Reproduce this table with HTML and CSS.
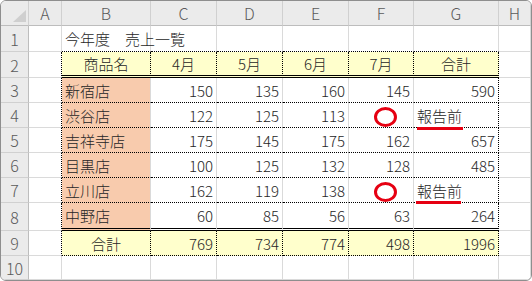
FILE: index.html
```html
<!DOCTYPE html>
<html lang="ja">
<head>
<meta charset="utf-8">
<title>売上一覧</title>
<link rel="stylesheet" href="styles.css">
</head>
<body>
<div class="frame">
  <div class="sheet">
    <!-- header row -->
    <div class="cell hd corner"><svg width="13" height="12" viewBox="0 0 13 12"><polygon points="13,0 13,12 0,12" fill="#cfcfcf"/></svg></div>
    <div class="cell hd">A</div>
    <div class="cell hd">B</div>
    <div class="cell hd">C</div>
    <div class="cell hd">D</div>
    <div class="cell hd">E</div>
    <div class="cell hd">F</div>
    <div class="cell hd">G</div>
    <div class="cell hd">H</div>

    <!-- row 1 -->
    <div class="cell rh">1</div>
    <div class="cell"></div>
    <div class="cell bdot title">今年度　売上一覧</div>
    <div class="cell bdot"></div>
    <div class="cell bdot"></div>
    <div class="cell bdot"></div>
    <div class="cell bdot"></div>
    <div class="cell bdot"></div>
    <div class="cell"></div>

    <!-- row 2 -->
    <div class="cell rh">2</div>
    <div class="cell vdot"></div>
    <div class="cell yel ctr vdot bdbl">商品名</div>
    <div class="cell yel ctr vdot bdbl">4月</div>
    <div class="cell yel ctr vdot bdbl">5月</div>
    <div class="cell yel ctr vdot bdbl">6月</div>
    <div class="cell yel ctr vdot bdbl">7月</div>
    <div class="cell yel ctr vdot bdbl">合計</div>
    <div class="cell"></div>

    <!-- row 3 -->
    <div class="cell rh">3</div>
    <div class="cell vdot"></div>
    <div class="cell sal bdot">新宿店</div>
    <div class="cell num bdot">150</div>
    <div class="cell num bdot">135</div>
    <div class="cell num bdot">160</div>
    <div class="cell num bdot">145</div>
    <div class="cell num bdot vdot">590</div>
    <div class="cell"></div>

    <!-- row 4 -->
    <div class="cell rh">4</div>
    <div class="cell vdot"></div>
    <div class="cell sal bdot">渋谷店</div>
    <div class="cell num bdot">122</div>
    <div class="cell num bdot">125</div>
    <div class="cell num bdot">113</div>
    <div class="cell num bdot"></div>
    <div class="cell bdot vdot">報告前</div>
    <div class="cell"></div>

    <!-- row 5 -->
    <div class="cell rh">5</div>
    <div class="cell vdot"></div>
    <div class="cell sal bdot">吉祥寺店</div>
    <div class="cell num bdot">175</div>
    <div class="cell num bdot">145</div>
    <div class="cell num bdot">175</div>
    <div class="cell num bdot">162</div>
    <div class="cell num bdot vdot">657</div>
    <div class="cell"></div>

    <!-- row 6 -->
    <div class="cell rh">6</div>
    <div class="cell vdot"></div>
    <div class="cell sal bdot">目黒店</div>
    <div class="cell num bdot">100</div>
    <div class="cell num bdot">125</div>
    <div class="cell num bdot">132</div>
    <div class="cell num bdot">128</div>
    <div class="cell num bdot vdot">485</div>
    <div class="cell"></div>

    <!-- row 7 -->
    <div class="cell rh">7</div>
    <div class="cell vdot"></div>
    <div class="cell sal bdot">立川店</div>
    <div class="cell num bdot">162</div>
    <div class="cell num bdot">119</div>
    <div class="cell num bdot">138</div>
    <div class="cell num bdot"></div>
    <div class="cell bdot vdot">報告前</div>
    <div class="cell"></div>

    <!-- row 8 -->
    <div class="cell rh">8</div>
    <div class="cell vdot"></div>
    <div class="cell sal bdbl">中野店</div>
    <div class="cell num bdbl">60</div>
    <div class="cell num bdbl">85</div>
    <div class="cell num bdbl">56</div>
    <div class="cell num bdbl">63</div>
    <div class="cell num bdbl vdot">264</div>
    <div class="cell"></div>

    <!-- row 9 -->
    <div class="cell rh">9</div>
    <div class="cell vdot"></div>
    <div class="cell yel ctr vdot bdot">合計</div>
    <div class="cell yel num vdot bdot">769</div>
    <div class="cell yel num vdot bdot">734</div>
    <div class="cell yel num vdot bdot">774</div>
    <div class="cell yel num vdot bdot">498</div>
    <div class="cell yel num vdot bdot">1996</div>
    <div class="cell"></div>

    <!-- row 10 -->
    <div class="cell rh">10</div>
    <div class="cell"></div>
    <div class="cell"></div>
    <div class="cell"></div>
    <div class="cell"></div>
    <div class="cell"></div>
    <div class="cell"></div>
    <div class="cell"></div>
    <div class="cell"></div>
  </div>

  <div class="mark circle c1"></div>
  <div class="mark circle c2"></div>
  <div class="mark uline u1"></div>
  <div class="mark uline u2"></div>
</div>
</body>
</html>
```

FILE: styles.css
```css
* { box-sizing: border-box; }

html, body {
  margin: 0;
  padding: 0;
  background: #ffffff;
}

.frame {
  position: relative;
  width: 532px;
  height: 281px;
  border: 1px solid #8e8e8e;
  border-radius: 6px;
  overflow: hidden;
  background: #ffffff;
}

.sheet {
  display: grid;
  grid-template-columns: 28px 33px 89px 66px 66px 66px 65px 85px 1fr;
  grid-template-rows: 25px 26px 26px 25px 25px 25px 25px 25px 28px 25px 1fr;
  height: 100%;
  font-family: "Noto Sans CJK JP", "Noto Sans", sans-serif;
  font-weight: 300;
  font-size: 15px;
  color: #262626;
}

.cell {
  display: flex;
  align-items: center;
  padding: 0 3px;
  border-right: 1px solid #dadada;
  border-bottom: 1px solid #dadada;
  white-space: nowrap;
  overflow: visible;
  line-height: 1;
}

.hd {
  background: #ebebeb;
  color: #5a5a5a;
  justify-content: center;
  font-size: 16px;
  border-right-color: #d0d0d0;
  border-bottom-color: #bdbdbd;
}

.corner {
  justify-content: flex-end;
  align-items: flex-end;
  padding: 0 2px 3px 0;
}

.corner svg { display: block; }

.rh {
  background: #ebebeb;
  color: #5a5a5a;
  justify-content: center;
  font-size: 16px;
  padding: 0;
  border-right-color: #bdbdbd;
  border-bottom-color: #d0d0d0;
}

.num { justify-content: flex-end; }
.ctr { justify-content: center; }

.yel { background: #ffffcc; }
.sal { background: #f8cbad; }

.vdot { border-right: 1px dotted #000000; }
.bdot { border-bottom: 1px dotted #000000; }
.bdbl { border-bottom: 3px double #000000; }

.title { overflow: visible; }

.mark { position: absolute; }

.circle {
  width: 23px;
  height: 20px;
  border: 3px solid #e60012;
  border-radius: 50%;
}

.c1 { left: 373px; top: 106px; }
.c2 { left: 373px; top: 181px; }

.uline {
  height: 3px;
  background: #e60012;
}

.u1 { left: 416px; top: 126px; width: 46px; }
.u2 { left: 415px; top: 200px; width: 45px; }
```
